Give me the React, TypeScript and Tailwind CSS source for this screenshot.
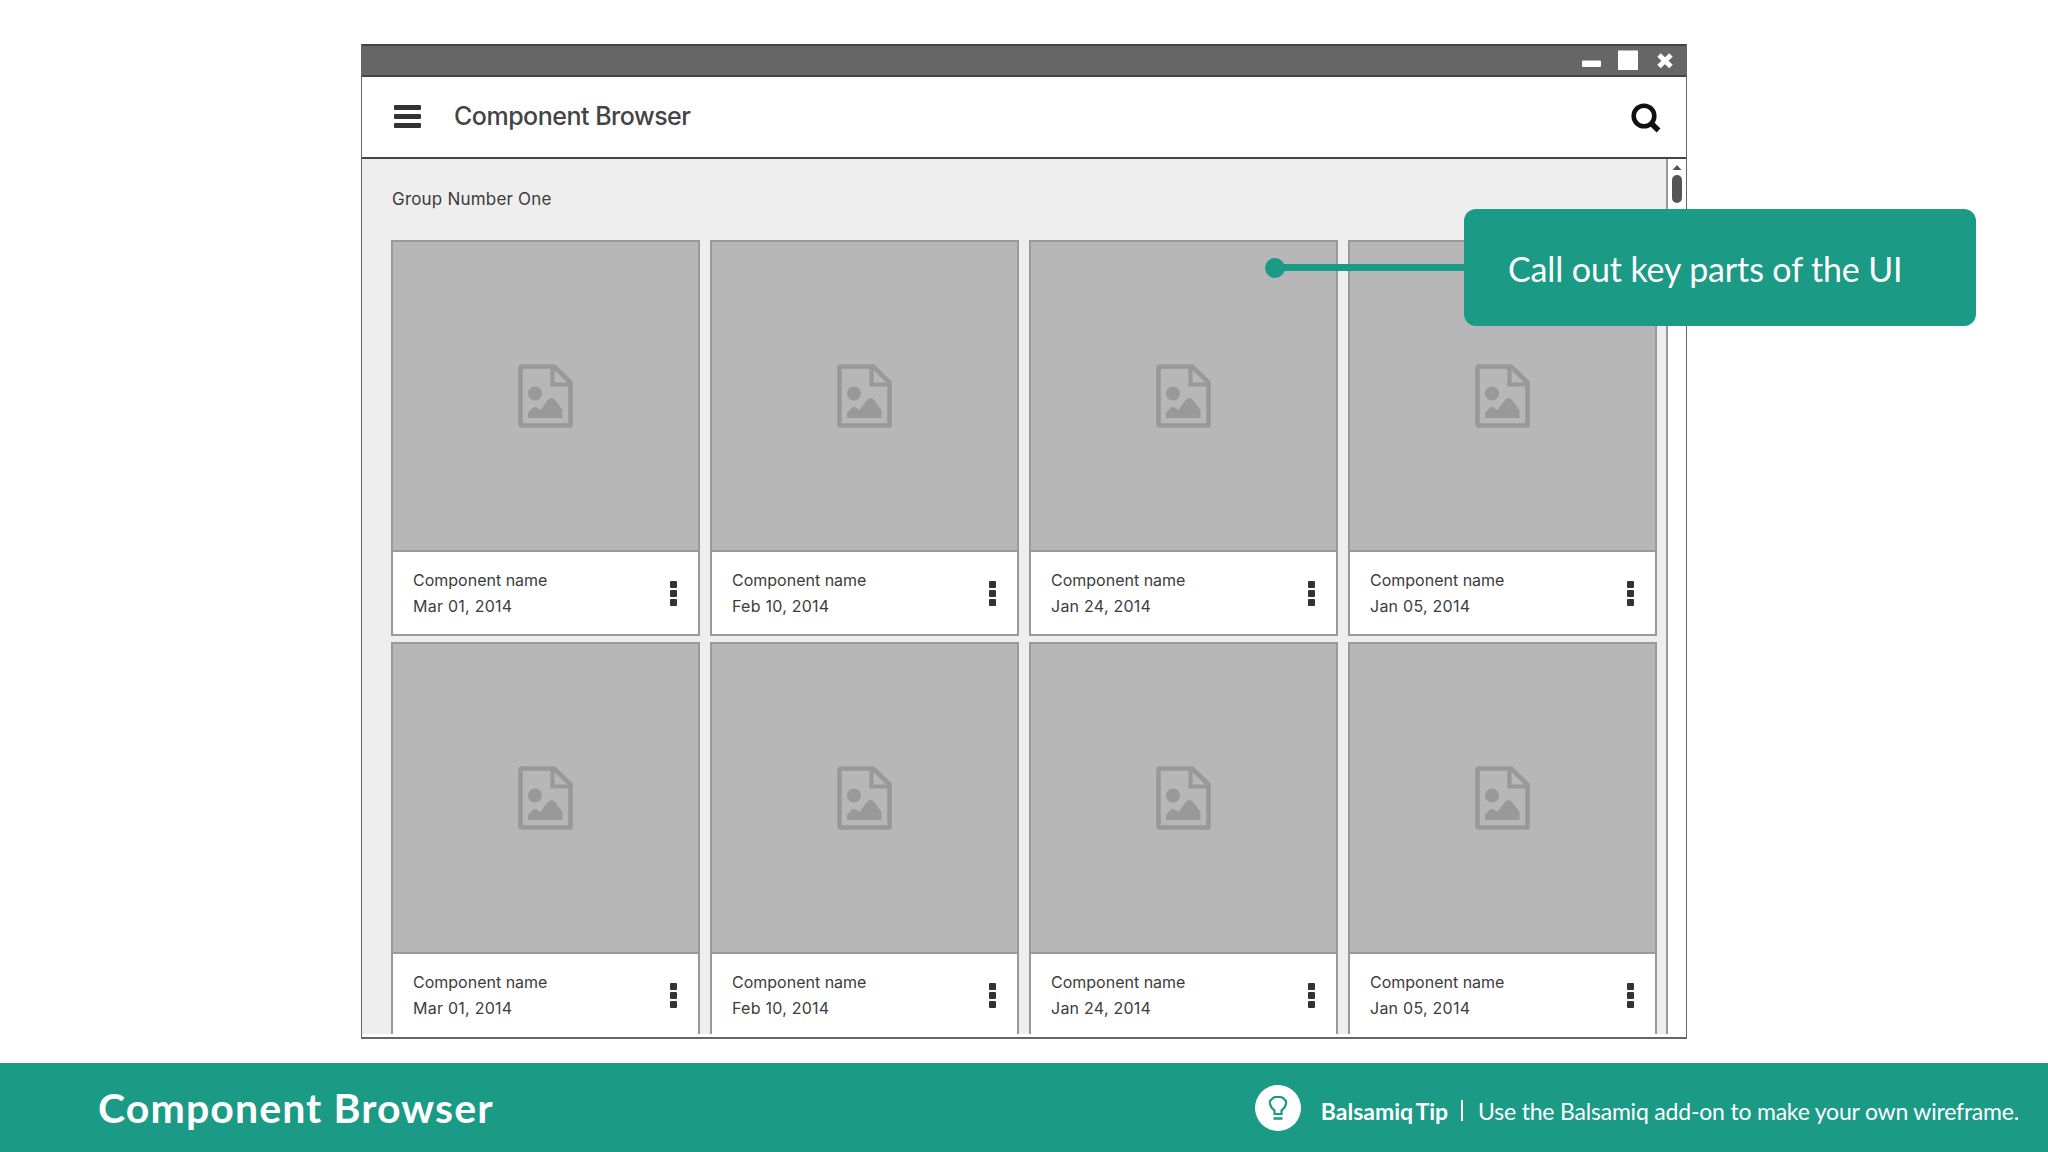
import React from 'react';

interface ComponentItem {
  name: string;
  date: string;
}

const ROW: ComponentItem[] = [
  { name: 'Component name', date: 'Mar 01, 2014' },
  { name: 'Component name', date: 'Feb 10, 2014' },
  { name: 'Component name', date: 'Jan 24, 2014' },
  { name: 'Component name', date: 'Jan 05, 2014' },
];

const ITEMS = [...ROW, ...ROW];

const FileImageIcon = () => (
  <svg width="55" height="64" viewBox="0 0 55 64" fill="none" className="text-[#999999]">
    <path d="M4 2.5h32L52.500 18.5V61.5H4Q2.5 61.5 2.5 60V4Q2.5 2.5 4 2.5Z" stroke="currentColor" strokeWidth="4.6" strokeLinejoin="round" />
    <path d="M34.500 3v17.5h17" stroke="currentColor" strokeWidth="4.2" />
    <circle cx="17" cy="29.500" r="7" fill="currentColor" />
    <path d="M10 54v-5l4.500-5q2.500-2 5 0l3 2 7-9.500q4-5 8 0l7 9.500v8z" fill="currentColor" />
  </svg>
);

const TitleBar = () => (
  <div className="flex h-[33px] shrink-0 items-center justify-end border-y-2 border-[#444444] bg-[#666666] pr-[10px]">
    <svg width="96" height="24" viewBox="0 0 96 24" fill="#ffffff">
      <rect x="2" y="11.500" width="19" height="6.500" rx="1" />
      <rect x="38" y="1.500" width="20" height="19.500" rx="0.500" />
      <path d="M79 6l12 11.500M91 6L79 17.500" stroke="#ffffff" strokeWidth="5" />
    </svg>
  </div>
);

const AppHeader = () => (
  <div className="flex h-[82px] shrink-0 items-center border-b-2 border-[#444444] bg-white pr-[25px] pl-[32px]">
    <div className="mb-[2px] flex flex-col gap-[4px]">
      <div className="h-[5px] w-[27px] rounded-[1px] bg-[#333333]" />
      <div className="h-[5px] w-[27px] rounded-[1px] bg-[#333333]" />
      <div className="h-[5px] w-[27px] rounded-[1px] bg-[#333333]" />
    </div>
    <h1 className="mb-[3px] ml-[33px] flex-1 text-[25px] leading-[32px] font-medium tracking-[-0.5px] text-[#444444]">Component Browser</h1>
    <svg width="30" height="30" viewBox="0 0 30 30" fill="none" stroke="#111111" className="mt-[1px]">
      <circle cx="13" cy="13" r="10.300" strokeWidth="4.600" />
      <path d="M20.500 20.500l7 7" strokeWidth="5.500" />
    </svg>
  </div>
);

const ComponentCard: React.FC<{ item: ComponentItem }> = ({ item }) => (
  <div className="flex h-[396px] flex-col border-2 border-[#999999] bg-white">
    <div className="flex h-[310px] items-center justify-center border-b-2 border-[#999999] bg-[#b7b7b7]">
      <FileImageIcon />
    </div>
    <div className="flex flex-1 items-center justify-between pr-[21px] pl-[20px]">
      <div className="text-[16px] leading-[26px] text-[#3c3c3c]">
        <p>{item.name}</p>
        <p className="tracking-[0.25px]">{item.date}</p>
      </div>
      <div className="flex flex-col gap-[2px]">
        <div className="size-[7px] rounded-[1px] bg-[#333333]" />
        <div className="size-[7px] rounded-[1px] bg-[#333333]" />
        <div className="size-[7px] rounded-[1px] bg-[#333333]" />
      </div>
    </div>
  </div>
);

const ScrollBar = () => (
  <div className="flex w-[20px] shrink-0 flex-col items-center border-l-2 border-[#999999] bg-white pt-[6px]">
    <svg width="10" height="5" viewBox="0 0 10 5">
      <path d="M5 0l4.500 5h-9z" fill="#555555" />
    </svg>
    <div className="mt-[5px] h-[28px] w-[10px] rounded-full bg-[#555555]" />
  </div>
);

const BrowserWindow = () => (
  <div className="ml-[361px] flex h-[995px] w-[1326px] flex-col border-r border-b-2 border-l border-[#666666] bg-white font-['Inter',sans-serif]">
    <TitleBar />
    <AppHeader />
    <div className="mb-[3px] flex min-h-0 flex-1">
      <div className="flex-1 overflow-hidden bg-[#eeeeee] pl-[29px]">
        <h2 className="mt-[26px] h-[55px] pl-[1px] text-[17px] leading-[28px] tracking-[0.2px] text-[#3c3c3c]">Group Number One</h2>
        <div className="grid grid-cols-[repeat(4,309px)] gap-x-[10px] gap-y-[6px]">
          {ITEMS.map((item, i) => (
            <ComponentCard key={i} item={item} />
          ))}
        </div>
      </div>
      <ScrollBar />
    </div>
  </div>
);

const Callout = () => (
  <div className="absolute top-[209px] left-[1265px] flex items-center font-['Lato',sans-serif]">
    <div className="size-[20px] rounded-full bg-[#1b9a86]" />
    <div className="-ml-[2px] h-[7px] w-[181px] bg-[#1b9a86]" />
    <div className="flex h-[117px] w-[512px] items-center rounded-[12px] bg-[#1b9a86] pt-[2px] pl-[44px] text-[34px] tracking-[-0.12px] whitespace-nowrap text-white">
      Call out key parts of the UI
    </div>
  </div>
);

const Footer = () => (
  <footer className="flex h-[89px] items-center justify-between bg-[#1b9a86] pr-[29px] pl-[98px] font-['Lato',sans-serif] text-white">
    <p className="text-[41px] font-bold tracking-[1.1px]">Component Browser</p>
    <div className="flex items-center">
      <div className="flex size-[46px] items-center justify-center rounded-full bg-white">
        <svg width="20" height="26" viewBox="0 0 20 26" fill="none" stroke="#1b9a86" strokeWidth="2.200">
          <path d="M6.500 19v-3.500L3.500 12.500 2 9V6L5 3l2-1h6l2 1 3 3v3l-1.500 3.500-3 3V19z" />
          <path d="M5.500 23.500h9" strokeWidth="2.500" />
        </svg>
      </div>
      <p className="mt-[7px] ml-[20px] text-[23px] font-bold [word-spacing:-2.5px]">Balsamiq Tip</p>
      <div className="mt-[6px] mr-[15px] ml-[13px] h-[21px] w-[2px] bg-white" />
      <p className="mt-[7px] text-[23px] tracking-[-0.2px]">Use the Balsamiq add-on to make your own wireframe.</p>
    </div>
  </footer>
);

export default function App() {
  return (
    <div className="relative flex h-[1152px] w-[2048px] flex-col justify-between overflow-hidden bg-white pt-[44px]">
      <BrowserWindow />
      <Callout />
      <Footer />
    </div>
  );
}
